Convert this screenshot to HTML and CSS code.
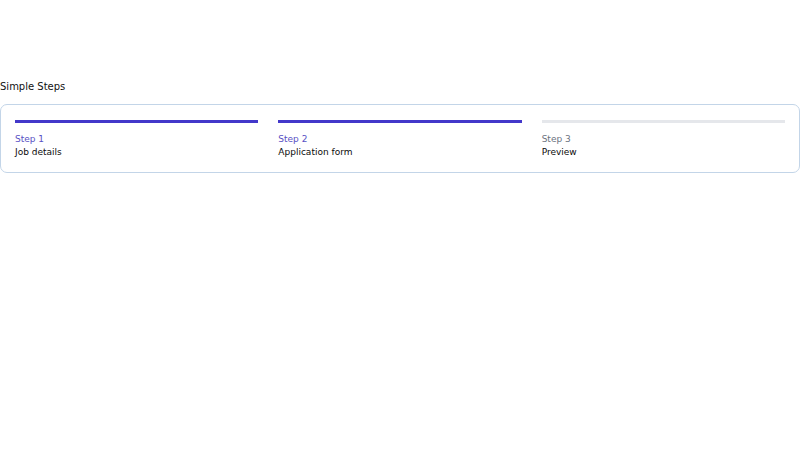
FILE: index.html
```html
<!DOCTYPE html>
<html>
<head>
<meta charset="utf-8">
<link rel="stylesheet" href="styles.css">
</head>
<body>
<div class="page">
  <div class="title">Simple Steps</div>
  <nav class="card">
    <ol class="steps">
      <li class="step done">
        <span class="label">Step 1</span>
        <span class="name">Job details</span>
      </li>
      <li class="step done">
        <span class="label">Step 2</span>
        <span class="name">Application form</span>
      </li>
      <li class="step">
        <span class="label">Step 3</span>
        <span class="name">Preview</span>
      </li>
    </ol>
  </nav>
</div>
</body>
</html>
```
FILE: styles.css
```css
html, body {
  margin: 0;
  padding: 0;
  background: #ffffff;
}
body {
  font-family: "DejaVu Sans", sans-serif;
  color: #111111;
}
.page {
  padding-top: 80px;
}
.title {
  font-size: 10px;
  line-height: 14px;
  margin-bottom: 10px;
}
.card {
  border: 1px solid #c3d5e8;
  border-radius: 7px;
  padding: 15px 14px 13px 14px;
}
.steps {
  list-style: none;
  margin: 0;
  padding: 0;
  display: flex;
  gap: 20px;
}
.step {
  flex: 1;
  display: flex;
  flex-direction: column;
  border-top: 3px solid #e5e7eb;
  padding-top: 10px;
}
.step.done {
  border-top-color: #4338ca;
}
.label {
  font-size: 9px;
  line-height: 13px;
  color: #6b7280;
}
.step.done .label {
  color: #5850c4;
}
.name {
  font-size: 9px;
  line-height: 13px;
  color: #0a0a0a;
}
```
